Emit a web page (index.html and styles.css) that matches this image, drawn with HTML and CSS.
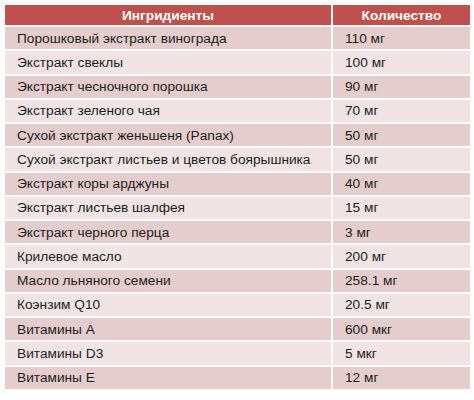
FILE: index.html
```html
<!DOCTYPE html>
<html lang="ru">
<head>
<meta charset="utf-8">
<link rel="stylesheet" href="styles.css">
</head>
<body>
<table class="tbl">
  <thead>
    <tr><th class="c1">Ингридиенты</th><th class="c2">Количество</th></tr>
  </thead>
  <tbody>
    <tr><td>Порошковый экстракт винограда</td><td>110 мг</td></tr>
    <tr><td>Экстракт свеклы</td><td>100 мг</td></tr>
    <tr><td>Экстракт чесночного порошка</td><td>90 мг</td></tr>
    <tr><td>Экстракт зеленого чая</td><td>70 мг</td></tr>
    <tr><td>Сухой экстракт женьшеня (Panax)</td><td>50 мг</td></tr>
    <tr><td>Сухой экстракт листьев и цветов боярышника</td><td>50 мг</td></tr>
    <tr><td>Экстракт коры арджуны</td><td>40 мг</td></tr>
    <tr><td>Экстракт листьев шалфея</td><td>15 мг</td></tr>
    <tr><td>Экстракт черного перца</td><td>3 мг</td></tr>
    <tr><td>Крилевое масло</td><td>200 мг</td></tr>
    <tr><td>Масло льняного семени</td><td>258.1 мг</td></tr>
    <tr><td>Коэнзим Q10</td><td>20.5 мг</td></tr>
    <tr><td>Витамины А</td><td>600 мкг</td></tr>
    <tr><td>Витамины D3</td><td>5 мкг</td></tr>
    <tr><td>Витамины Е</td><td>12 мг</td></tr>
  </tbody>
</table>
</body>
</html>
```
FILE: styles.css
```css
html, body {
  margin: 0;
  padding: 0;
  background: #ffffff;
}
body {
  padding: 5px 4px 0 5px;
  font-family: "Liberation Sans", Arial, sans-serif;
}
.tbl {
  width: 465px;
  border-collapse: separate;
  border-spacing: 0;
  table-layout: fixed;
  font-size: 13.7px;
  color: #1c1c1c;
}
.tbl th, .tbl td {
  height: 22.25px;
  padding: 0 0 0 12px;
  border-bottom: 2px solid #ffffff;
  white-space: nowrap;
  overflow: hidden;
  vertical-align: middle;
}
.tbl th {
  background: #c0504d;
  color: #ffffff;
  font-weight: bold;
  text-align: center;
  padding: 0;
  height: 20px;
}
.tbl .c1 { width: 326px; }
.tbl td:first-child, .tbl th:first-child {
  border-right: 2px solid #ffffff;
}
.tbl tbody tr:nth-child(odd) td { background: #e6cdcd; }
.tbl tbody tr:nth-child(even) td { background: #f2e4e4; }
.tbl tbody tr:last-child td { border-bottom: none; }
```
